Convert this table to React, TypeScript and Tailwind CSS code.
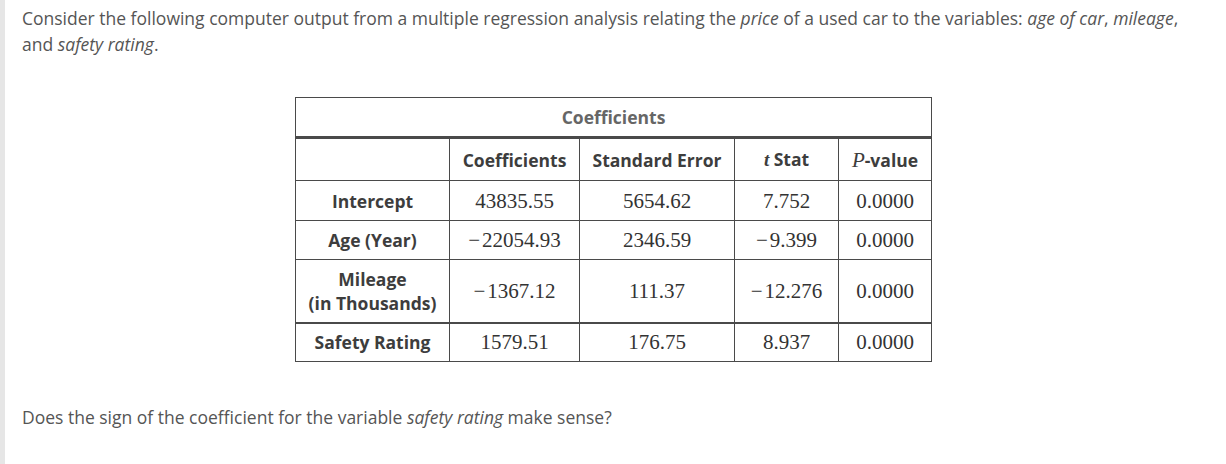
export default function App() {
  const rows = [
    { label: "Intercept", coef: "43835.55", se: "5654.62", t: "7.752", p: "0.0000", h: "h-[40px]" },
    { label: "Age (Year)", coef: "\u2212\u200a22054.93", se: "2346.59", t: "\u2212\u200a9.399", p: "0.0000", h: "h-[39px]" },
    { label: "Mileage\n(in Thousands)", coef: "\u2212\u200a1367.12", se: "111.37", t: "\u2212\u200a12.276", p: "0.0000", h: "h-[63px]" },
    { label: "Safety Rating", coef: "1579.51", se: "176.75", t: "8.937", p: "0.0000", h: "h-[39px]" },
  ];

  const num = "border border-[#4a4a4a] text-center font-['Liberation_Serif',serif] text-[21px] text-[#333]";
  const head = "border border-[#4a4a4a] text-center font-bold text-[17.5px] text-[#3d3d3d]";

  return (
    <div className="min-h-[464px] w-[1226px] bg-white border-l-[5px] border-[#e6e6e6] pl-[17px] pt-[5px] font-['Open_Sans',sans-serif] text-[17.5px] leading-[26px] text-[#555]">
      <p className="pr-[40px]">
        Consider the following computer output from a multiple regression analysis relating the <i>price</i> of a used car to the variables: <i>age of car</i>, <i>mileage</i>, and <i>safety rating</i>.
      </p>

      <table className="mt-[40px] ml-[273px] border-collapse table-fixed w-[636px] leading-[24px]">
        <colgroup>
          <col className="w-[154px]" />
          <col className="w-[130px]" />
          <col className="w-[155px]" />
          <col className="w-[104px]" />
          <col className="w-[93px]" />
        </colgroup>
        <tbody>
          <tr className="h-[40px]">
            <td colSpan={5} className="border border-[#4a4a4a] border-b-[3px] text-center font-bold text-[17.5px] text-[#666]">
              Coefficients
            </td>
          </tr>
          <tr className="h-[43px]">
            <td className="border border-[#4a4a4a]"></td>
            <td className={head}>Coefficients</td>
            <td className={head}>Standard Error</td>
            <td className={head}>
              <span className="font-['Liberation_Serif',serif] italic font-bold text-[19px]">t</span> Stat
            </td>
            <td className={head}>
              <span className="font-['Liberation_Serif',serif] italic font-normal text-[21px]">P</span>-value
            </td>
          </tr>
          {rows.map((r, i) => (
            <tr key={r.label} className={r.h}>
              <td className={`${head} whitespace-pre-line ${i === 3 ? "border-t-2" : ""}`}>{r.label}</td>
              <td className={`${num} ${i === 3 ? "border-t-2" : ""}`}>{r.coef}</td>
              <td className={`${num} ${i === 3 ? "border-t-2" : ""}`}>{r.se}</td>
              <td className={`${num} ${i === 3 ? "border-t-2" : ""}`}>{r.t}</td>
              <td className={`${num} ${i === 3 ? "border-t-2" : ""}`}>{r.p}</td>
            </tr>
          ))}
        </tbody>
      </table>

      <p className="mt-[42px]">
        Does the sign of the coefficient for the variable <i>safety rating</i> make sense?
      </p>
    </div>
  );
}
